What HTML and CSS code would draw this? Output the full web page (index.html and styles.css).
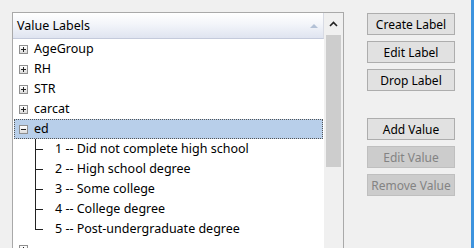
FILE: index.html
```html
<!DOCTYPE html>
<html lang="en">
<head>
    <meta charset="UTF-8">
    <title>Value Labels</title>
    <link rel="stylesheet" href="styles.css">
</head>
<body>
    <div class="window">
        <div class="tree-panel">
            <div class="tree-list">
                <div class="header">
                    <span>Value Labels</span>
                    <span class="sort-arrow"></span>
                </div>
                <div class="rows">
                    <div class="row"><span class="expander plus"></span>AgeGroup</div>
                    <div class="row"><span class="expander plus"></span>RH</div>
                    <div class="row"><span class="expander plus"></span>STR</div>
                    <div class="row"><span class="expander plus"></span>carcat</div>
                    <div class="row selected"><span class="expander minus"></span>ed</div>
                    <div class="row child">1 -- Did not complete high school</div>
                    <div class="row child">2 -- High school degree</div>
                    <div class="row child">3 -- Some college</div>
                    <div class="row child">4 -- College degree</div>
                    <div class="row child last">5 -- Post-undergraduate degree</div>
                    <div class="row"><span class="expander plus"></span></div>
                </div>
            </div>
            <div class="scrollbar">
                <div class="scroll-up">
                    <svg width="9" height="6" viewBox="0 0 9 6"><path d="M1 5 L4.5 1.5 L8 5" fill="none" stroke="#222" stroke-width="1.6"/></svg>
                </div>
                <div class="scroll-thumb"></div>
            </div>
        </div>

        <div class="buttons">
            <button class="btn">Create Label</button>
            <button class="btn">Edit Label</button>
            <button class="btn">Drop Label</button>
            <button class="btn gap">Add Value</button>
            <button class="btn" disabled>Edit Value</button>
            <button class="btn" disabled>Remove Value</button>
        </div>
    </div>
</body>
</html>
```

FILE: styles.css
```css
* {
    margin: 0;
    padding: 0;
    box-sizing: border-box;
    font-family: 'Noto Sans', 'Open Sans', sans-serif;
}

body {
    width: 474px;
    height: 248px;
    overflow: hidden;
    background: #f0f0f0;
    font-size: 12.5px;
    color: #000;
}

.window {
    height: 248px;
    display: flex;
    padding: 12px 0 0 12px;
    border-right: 3px solid #3d93de;
}

.tree-panel {
    width: 332px;
    height: 260px;
    display: flex;
    border: 1px solid #a9a9a9;
    border-bottom: none;
    background: #fff;
}

.tree-list {
    width: 311px;
    flex-shrink: 0;
}

.header {
    height: 26px;
    display: flex;
    align-items: center;
    justify-content: space-between;
    padding: 0 4px 0 4px;
    background: linear-gradient(#ffffff, #f3f5fa 45%, #dfe4f0);
    border-bottom: 1px solid #c4cadb;
    border-right: 1px solid #d8dbe4;
}

.sort-arrow {
    width: 0;
    height: 0;
    border-left: 4px solid transparent;
    border-right: 4px solid transparent;
    border-bottom: 4px solid #b3c1d6;
    margin-right: 1px;
}

.row {
    position: relative;
    height: 20px;
    line-height: 20px;
    display: flex;
    align-items: center;
    padding-left: 6px;
    white-space: nowrap;
}

.row.selected {
    background: #b8cfea;
    outline: 1px dotted #555;
    outline-offset: -1px;
    margin: 0 1px;
    padding-left: 5px;
}

.expander {
    position: relative;
    width: 9px;
    height: 9px;
    margin-right: 6px;
    border: 1px solid #8f8f8f;
    background: linear-gradient(#ffffff, #dcdcdc);
}

.expander::before {
    content: "";
    position: absolute;
    left: 1px;
    top: 3px;
    width: 5px;
    height: 1px;
    background: #222;
}

.expander.plus::after {
    content: "";
    position: absolute;
    left: 3px;
    top: 1px;
    width: 1px;
    height: 5px;
    background: #222;
}

.row.child {
    padding-left: 42px;
}

.row.child::before {
    content: "";
    position: absolute;
    left: 22px;
    top: 0;
    width: 1px;
    height: 20px;
    background: #222;
}

.row.child.last::before {
    height: 11px;
}

.row.child::after {
    content: "";
    position: absolute;
    left: 22px;
    top: 10px;
    width: 8px;
    height: 1px;
    background: #222;
}

.scrollbar {
    width: 19px;
    background: #f0f0f0;
    display: flex;
    flex-direction: column;
    align-items: center;
}

.scroll-up {
    height: 22px;
    width: 100%;
    display: flex;
    align-items: center;
    justify-content: center;
}

.scroll-thumb {
    width: 15px;
    height: 132px;
    background: #cdcdcd;
}

.buttons {
    width: 88px;
    margin-left: 23px;
    display: flex;
    flex-direction: column;
    gap: 6px;
    padding-top: 1px;
}

.btn {
    height: 22px;
    font-family: 'Noto Sans', 'Open Sans', sans-serif;
    font-size: 12px;
    color: #000;
    background: #e1e1e1;
    border: 1px solid #adadad;
}

.btn.gap {
    margin-top: 21px;
}

.btn:disabled {
    color: #838383;
    background: #cccccc;
    border-color: #bfbfbf;
}
```
